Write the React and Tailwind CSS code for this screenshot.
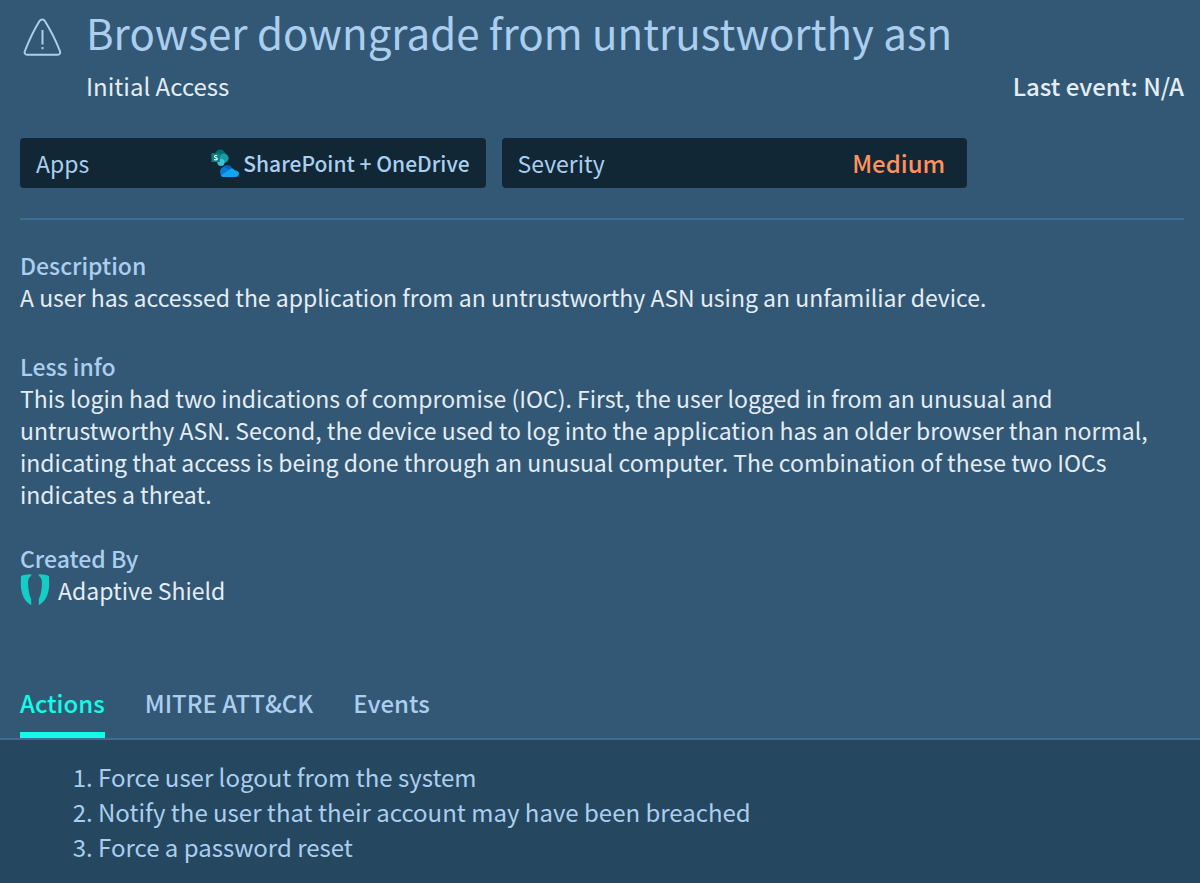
import { useState } from 'react'

const actions = [
  'Force user logout from the system',
  'Notify the user that their account may have been breached',
  'Force a password reset',
]

const tabs = ['Actions', 'MITRE ATT&CK', 'Events']

function WarningIcon() {
  return (
    <svg className="mt-3 h-10 w-11 shrink-0" viewBox="0 0 44 40" fill="none" stroke="currentColor" strokeWidth="2" strokeLinejoin="round" aria-hidden="true">
      <path d="M19.700 4.800c1.200-1.900 3.800-1.900 5 0 4.200 6.600 11 19.500 15.400 30.700.5 1.700-.6 3.200-2.400 3.200H7.100c-1.800 0-2.900-1.500-2.400-3.200C9.100 24.300 15.500 11.400 19.700 4.800Z" />
      <path d="M22.500 14v14.500M22.500 31v2.300" />
    </svg>
  )
}

function AppsIcon() {
  return (
    <svg className="size-7 shrink-0" viewBox="0 0 28 28" aria-hidden="true">
      <circle cx="9.300" cy="5.500" r="5" fill="#036c70" />
      <circle cx="12.900" cy="9.300" r="4.700" fill="#1a9ba1" />
      <circle cx="10" cy="13.300" r="3.600" fill="#37c6d0" />
      <rect x=".5" y="4.300" width="8.400" height="8.800" rx=".7" fill="#058387" />
      <path d="M6.200 6.900c-.5-.4-2.800-.7-2.800.6 0 1.400 2.900.8 2.900 2.300 0 1.400-2.400 1.200-3.100.6" fill="none" stroke="#fff" strokeWidth="1.100" />
      <path d="M9.200 22c0-2 1.200-3.500 3.200-3.800 1-2.500 6-3.500 8.300.3.800 1.200.9 2 1 2.500L14 27Z" fill="#0364b8" />
      <path d="M12.400 18.200c1.300-.1 2.100.3 3 .8l4.600 2.800-7.300 5.800c-2.500 0-3.700-2.100-3.500-4.800.2-2.400 1.400-4.400 3.200-4.600Z" fill="#0f78d4" />
      <path d="M18.300 20.700c1.200-1.500 4-1.700 5.200.6 2.500 0 4.500 1.300 4.500 3.300S26.600 28 24.500 28H13c-1.500 0-2.500-.5-3.200-1.600Z" fill="#0fa5f0" />
    </svg>
  )
}

function ShieldIcon() {
  return (
    <svg className="h-8 w-[30px] shrink-0" viewBox="0 0 30 32" fill="#15cdc4" aria-hidden="true">
      <path d="M1 1.900C3.500.9 7.300.1 11.200.2V2C8.500 3.500 8 6 8.100 10.500c.2 6 1.300 11.300 3.100 14.500v6.200C5 28.200 1 20.500.8 10.500Z" />
      <path d="M29 1.900C26.500.9 22.700.1 18.800.2V2c2.700 1.500 3.200 4 3.100 8.500-.2 6-1.300 11.300-3.100 14.500v6.200C25 28.200 29 20.500 29.200 10.500Z" />
    </svg>
  )
}

function InfoSection({ title, children }) {
  return (
    <section className="text-[23px] leading-8">
      <h2 className="font-medium text-[#abceef]">{title}</h2>
      {children}
    </section>
  )
}

export default function App() {
  const [active, setActive] = useState('Actions')
  return (
    <main className="flex min-h-screen flex-col bg-[#335875] font-['Noto_Sans_CJK_SC',sans-serif] text-[#e4ecf4]">
      <div className="pr-4 pl-5">
        <header className="flex gap-[22px] pt-1">
          <div className="text-[#abceef]"><WarningIcon /></div>
          <div className="grow">
            <h1 className="text-[42px] leading-14 text-[#abceef]">Browser downgrade from untrustworthy asn</h1>
            <div className="mt-2 flex justify-between text-2xl leading-9">
              <p>Initial Access</p>
              <p className="font-medium">Last event: N/A</p>
            </div>
          </div>
        </header>

        <dl className="mt-[34px] flex gap-4 text-[#abceef]">
          <div className="flex w-2/5 items-center justify-between rounded bg-[#112735] px-4 py-2 leading-[34px]">
            <dt className="text-[23px]">Apps</dt>
            <dd className="flex items-center gap-1 text-[21px] font-medium"><AppsIcon />SharePoint + OneDrive</dd>
          </div>
          <div className="flex w-2/5 items-center justify-between rounded bg-[#112735] py-2 pr-[22px] pl-4 leading-[34px]">
            <dt className="text-[23px]">Severity</dt>
            <dd className="text-2xl font-medium text-[#ff915d]">Medium</dd>
          </div>
        </dl>

        <hr className="mt-[30px] border-t-2 border-[#3d6c94]" />

        <div className="mt-[29px] flex flex-col gap-[37px]">
          <InfoSection title="Description">
            <p>A user has accessed the application from an untrustworthy ASN using an unfamiliar device.</p>
          </InfoSection>
          <InfoSection title="Less info">
            <p>
              This login had two indications of compromise (IOC). First, the user logged in from an unusual and
              untrustworthy ASN. Second, the device used to log into the application has an older browser than normal,
              indicating that access is being done through an unusual computer. The combination of these two IOCs
              indicates a threat.
            </p>
          </InfoSection>
        </div>
        <div className="mt-8">
          <InfoSection title="Created By">
            <p className="flex items-center gap-2"><ShieldIcon />Adaptive Shield</p>
          </InfoSection>
        </div>
      </div>

      <div role="tablist" className="mt-[79px] flex gap-10 border-b-2 border-[#3d6c94] px-5">
        {tabs.map((tab) => (
          <button
            key={tab}
            type="button"
            role="tab"
            aria-selected={tab === active}
            onClick={() => setActive(tab)}
            className={
              tab === active
                ? 'border-b-6 border-[#14fbe7] pb-[11px] text-2xl leading-9 font-medium text-[#14fbe7]'
                : 'border-b-6 border-transparent pb-[11px] text-2xl leading-9 font-medium text-[#abceef]'
            }
          >
            {tab}
          </button>
        ))}
      </div>
      <div role="tabpanel" className="grow bg-[#254760] pt-[19px] pl-[98px] text-2xl leading-[35px] text-[#abceef]">
        <ol className="list-decimal">
          {actions.map((a) => <li key={a}>{a}</li>)}
        </ol>
      </div>
    </main>
  )
}
